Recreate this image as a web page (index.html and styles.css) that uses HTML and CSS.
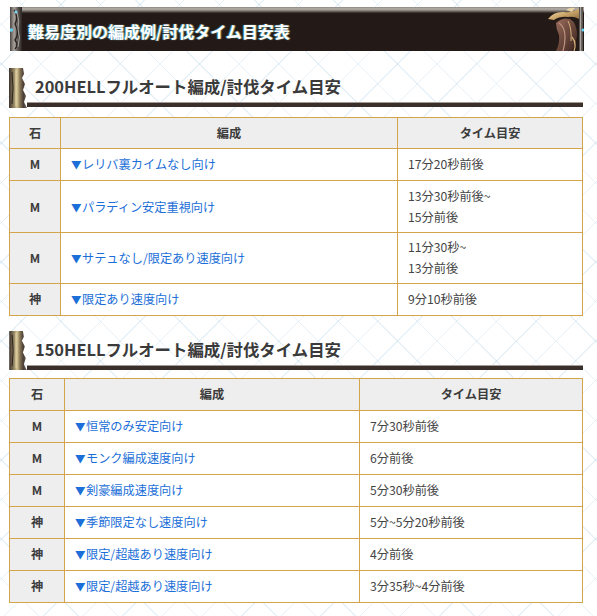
FILE: index.html
```html
<!DOCTYPE html>
<html lang="ja">
<head>
<meta charset="utf-8">
<title>難易度別の編成例/討伐タイム目安表</title>
<link rel="stylesheet" href="styles.css">
</head>
<body>
<div class="page">
  <div class="title-bar">
    <svg class="tb-orn-l" viewBox="0 0 12 44" width="12" height="44">
      <defs>
        <linearGradient id="m1" x1="0" x2="1" y1="0" y2="0">
          <stop offset="0" stop-color="#4a4442"/>
          <stop offset=".35" stop-color="#a8a09a"/>
          <stop offset=".65" stop-color="#5e5753"/>
          <stop offset="1" stop-color="#2a2523"/>
        </linearGradient>
      </defs>
      <rect width="12" height="44" fill="url(#m1)"/>
      <path d="M4 3 Q9 10 5 17 Q10 26 5 33 Q9 38 5 42" stroke="#2a2422" fill="none" stroke-width="1.4"/>
      <path d="M7 6 Q10 14 8 22 Q11 30 8 40" stroke="#cfc8c2" fill="none" stroke-width=".7"/>
      <circle cx="6" cy="5" r="1.6" fill="#7fd6ee"/>
      <circle cx="1.4" cy="23" r="1.8" fill="#5fd0f0"/>
    </svg>
    <h2 class="title-text">難易度別の編成例/討伐タイム目安表</h2>
    <svg class="tb-orn-r" viewBox="0 0 40 44" width="40" height="44">
      <defs>
        <linearGradient id="g1" x1="0" x2="1" y1="0" y2="1">
          <stop offset="0" stop-color="#f3e2b8"/>
          <stop offset=".5" stop-color="#cda86c"/>
          <stop offset="1" stop-color="#8a6a40"/>
        </linearGradient>
        <linearGradient id="b1" x1="0" x2="1" y1="0" y2="1">
          <stop offset="0" stop-color="#9a6c5a"/>
          <stop offset="1" stop-color="#3b2420"/>
        </linearGradient>
      </defs>
      <path d="M4 12 Q10 4 20 5 Q28 6 32 3 L35 2 L35 12 Q30 9 24 10 Q16 9 10 13 Z" fill="url(#g1)"/>
      <path d="M22 3 Q26 0 31 1 L28 5 Z" fill="#e8d3a4"/>
      <path d="M12 16 Q18 10 26 12 Q33 16 33 28 Q32 38 28 44 L12 44 Q16 36 15 28 Q12 22 12 16 Z" fill="url(#b1)"/>
      <path d="M15 16 Q21 20 21 30 Q21 38 19 44" stroke="#c09480" stroke-width="1.2" fill="none"/>
      <path d="M24 14 Q28 22 27 34" stroke="#d8b27c" stroke-width="1" fill="none"/>
      <path d="M28 30 Q33 36 30 44" stroke="#d6b078" stroke-width="1.2" fill="none"/>
      <rect x="35" y="0" width="4" height="44" fill="#5a5451"/>
      <rect x="36" y="0" width="1.2" height="44" fill="#a9a29d"/>
      <circle cx="39" cy="23" r="1.6" fill="#5fd0f0"/>
    </svg>
  </div>

  <div class="sec-head">
    <svg class="sh-orn" viewBox="0 0 18 40" width="18" height="40">
      <defs>
        <linearGradient id="o1" x1="0" x2="1" y1="0" y2="0">
          <stop offset="0" stop-color="#3c322c"/>
          <stop offset=".25" stop-color="#8c7d5c"/>
          <stop offset=".45" stop-color="#d6c594"/>
          <stop offset=".6" stop-color="#8a7a58"/>
          <stop offset=".8" stop-color="#4a3e36"/>
          <stop offset="1" stop-color="#6b625c"/>
        </linearGradient>
      </defs>
      <path d="M0 0 L14 0 L15 6 L13 10 L16 16 L14 22 L17 28 L15 34 L18 40 L0 40 Z" fill="url(#o1)"/>
      <path d="M7 2 L7 38" stroke="#efe2b8" stroke-width=".8"/>
      <path d="M3 4 Q5 20 3 36" stroke="#2a221e" stroke-width="1" fill="none"/>
    </svg>
    <h3 class="sh-text">200HELLフルオート編成/討伐タイム目安</h3>
  </div>

  <table class="tbl tbl-first">
    <colgroup>
      <col class="t1-c1"><col><col class="t1-c3">
    </colgroup>
    <thead>
      <tr class="hdr-short"><th>石</th><th>編成</th><th>タイム目安</th></tr>
    </thead>
    <tbody>
      <tr><th class="stone">M</th><td><a class="lnk" href="#"><span class="tri">▼</span>レリバ裏カイムなし向け</a></td><td>17分20秒前後</td></tr>
      <tr class="two-a"><th class="stone">M</th><td><a class="lnk" href="#"><span class="tri">▼</span>パラディン安定重視向け</a></td><td>13分30秒前後~<br>15分前後</td></tr>
      <tr class="two-b"><th class="stone">M</th><td><a class="lnk" href="#"><span class="tri">▼</span>サテュなし/限定あり速度向け</a></td><td>11分30秒~<br>13分前後</td></tr>
      <tr><th class="stone">神</th><td><a class="lnk" href="#"><span class="tri">▼</span>限定あり速度向け</a></td><td>9分10秒前後</td></tr>
    </tbody>
  </table>

  <div class="sec-head sec-head-2">
    <svg class="sh-orn" viewBox="0 0 18 40" width="18" height="40">
      <path d="M0 0 L14 0 L15 6 L13 10 L16 16 L14 22 L17 28 L15 34 L18 40 L0 40 Z" fill="url(#o1)"/>
      <path d="M7 2 L7 38" stroke="#efe2b8" stroke-width=".8"/>
      <path d="M3 4 Q5 20 3 36" stroke="#2a221e" stroke-width="1" fill="none"/>
    </svg>
    <h3 class="sh-text">150HELLフルオート編成/討伐タイム目安</h3>
  </div>

  <table class="tbl tbl-second">
    <colgroup>
      <col class="t2-c1"><col><col class="t2-c3">
    </colgroup>
    <thead>
      <tr><th>石</th><th>編成</th><th>タイム目安</th></tr>
    </thead>
    <tbody>
      <tr><th class="stone">M</th><td><a class="lnk" href="#"><span class="tri">▼</span>恒常のみ安定向け</a></td><td>7分30秒前後</td></tr>
      <tr><th class="stone">M</th><td><a class="lnk" href="#"><span class="tri">▼</span>モンク編成速度向け</a></td><td>6分前後</td></tr>
      <tr><th class="stone">M</th><td><a class="lnk" href="#"><span class="tri">▼</span>剣豪編成速度向け</a></td><td>5分30秒前後</td></tr>
      <tr><th class="stone">神</th><td><a class="lnk" href="#"><span class="tri">▼</span>季節限定なし速度向け</a></td><td>5分~5分20秒前後</td></tr>
      <tr><th class="stone">神</th><td><a class="lnk" href="#"><span class="tri">▼</span>限定/超越あり速度向け</a></td><td>4分前後</td></tr>
      <tr><th class="stone">神</th><td><a class="lnk" href="#"><span class="tri">▼</span>限定/超越あり速度向け</a></td><td>3分35秒~4分前後</td></tr>
    </tbody>
  </table>
</div>
</body>
</html>
```

FILE: styles.css
```css
html, body {
  margin: 0;
  padding: 0;
}

body {
  font-family: "Noto Sans CJK JP", "Noto Sans", "Liberation Sans", sans-serif;
  color: #444;
  background-color: #ffffff;
  background-image:
    repeating-linear-gradient(45deg, transparent 0, transparent 27px, rgba(170, 205, 230, 0.28) 27px, rgba(170, 205, 230, 0.28) 28px),
    repeating-linear-gradient(-45deg, transparent 0, transparent 27px, rgba(170, 205, 230, 0.28) 27px, rgba(170, 205, 230, 0.28) 28px);
  min-height: 616px;
}

.page {
  width: 574px;
  padding: 7px 14px 12px 9px;
}

/* ---------- Title bar ---------- */
.title-bar {
  display: flex;
  align-items: stretch;
  height: 44px;
  margin-left: 1px;
  margin-right: -1px;
  background:
    linear-gradient(to bottom, #8d8680 0, #b8b1ab 2px, #7a726c 4px, #2a201d 6px, #231917 7px, #231917 100%);
}

.tb-orn-l {
  flex: none;
  display: block;
}

.tb-orn-r {
  flex: none;
  display: block;
  margin-left: auto;
}

.title-text {
  margin: 0;
  padding: 3px 0 0 6px;
  align-self: center;
  font-size: 16px;
  font-weight: 700;
  line-height: 24px;
  color: #ffffff;
  text-shadow: -1px 0 1px #3aa0e8, 1px 0 1px #d6a85a;
}

/* ---------- Section heading ---------- */
.sec-head {
  display: flex;
  align-items: flex-start;
  margin-top: 17px;
  height: 40px;
}

.sec-head-2 {
  margin-top: 15px;
  height: 39px;
}

.sh-orn {
  flex: none;
  display: block;
}

.sec-head-2 .sh-orn {
  height: 39px;
}

.sh-text {
  flex: 1;
  margin: 0;
  height: 35px;
  padding-left: 8px;
  font-size: 16.4px;
  font-weight: 700;
  line-height: 36px;
  color: #3a3a3a;
  border-bottom: 4px solid #3a2f2a;
  background: linear-gradient(to bottom, transparent 34px, #a39a93 34px);
}

/* ---------- Tables ---------- */
.tbl {
  width: 100%;
  margin-top: 9px;
  border-collapse: collapse;
  background: #ffffff;
  font-size: 12.2px;
  line-height: 21px;
}

.tbl-second {
  margin-top: 8px;
}

.tbl th,
.tbl td {
  border: 1px solid #d4a44c;
  padding: 5px 10px;
  vertical-align: middle;
}

.tbl .hdr-short th {
  padding-bottom: 4px;
}

.tbl .two-a th,
.tbl .two-a td {
  padding-bottom: 4px;
}

.tbl .two-b th,
.tbl .two-b td {
  padding-top: 4px;
  padding-bottom: 4px;
}

.tbl thead th {
  background: #eeeeee;
  font-weight: 700;
  color: #3c3c3c;
  text-align: center;
}

.tbl .stone {
  background: #eeeeee;
  font-weight: 700;
  color: #3c3c3c;
  text-align: center;
  padding-left: 4px;
  padding-right: 4px;
}

.tbl td {
  color: #444;
  text-align: left;
}

.lnk {
  color: #1c6fd8;
  text-decoration: none;
}

.tri {
  display: inline-block;
  width: 11px;
  font-size: 10.5px;
  line-height: 21px;
  vertical-align: top;
}

.t1-c1 { width: 51px; }
.t1-c3 { width: 185px; }
.t2-c1 { width: 55px; }
.t2-c3 { width: 223px; }
```
